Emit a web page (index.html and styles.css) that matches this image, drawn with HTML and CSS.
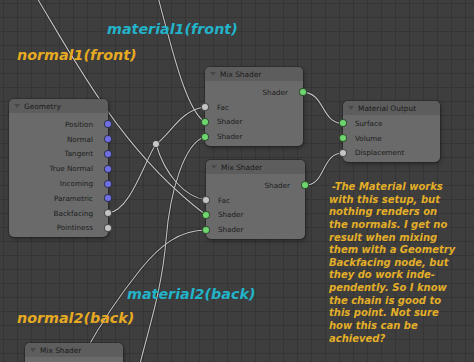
FILE: index.html
```
<!DOCTYPE html>
<html>
<head>
<meta charset="utf-8">
<link rel="stylesheet" href="styles.css">
</head>
<body>
<div class="editor">
  <svg class="wires" width="474" height="362" viewBox="0 0 474 362">
    <defs>
      <path id="w1" d="M31,-12 C75,60 120,150 206,215"/>
      <path id="w2" d="M156,-10 C170,40 185,110 205,122"/>
      <path id="w3" d="M205,137 C185,142 170,190 166,240 S148,330 138,372"/>
      <path id="w4" d="M206,230 C180,230 160,245 140,270 C120,295 100,325 85,352"/>
      <path id="w5" d="M108,213 C130,212 145,160 156,144"/>
      <path id="w6" d="M156,144 C170,135 180,110 205,107"/>
      <path id="w7" d="M156,144 C165,175 185,197 206,200"/>
      <path id="w8" d="M303,92.4 C325,92.4 321,123.4 343,123.4"/>
      <path id="w9" d="M305,185.4 C326,185.4 321,153 343,153"/>
    </defs>
    <g class="wire-bg">
      <use href="#w1"/><use href="#w2"/><use href="#w3"/><use href="#w4"/><use href="#w5"/><use href="#w6"/><use href="#w7"/><use href="#w8"/><use href="#w9"/>
    </g>
    <g class="wire-fg">
      <use href="#w1"/><use href="#w2"/><use href="#w3"/><use href="#w4"/><use href="#w5"/><use href="#w6"/><use href="#w7"/><use href="#w8"/><use href="#w9"/>
    </g>
    <circle class="reroute" cx="156" cy="144" r="3.6"/>
  </svg>

  <div class="node node-geometry">
    <div class="node-head"><span class="tri"></span>Geometry</div>
    <div class="node-body">
      <div class="row out"><span>Position</span><i class="sock vec"></i></div>
      <div class="row out"><span>Normal</span><i class="sock vec"></i></div>
      <div class="row out"><span>Tangent</span><i class="sock vec"></i></div>
      <div class="row out"><span>True Normal</span><i class="sock vec"></i></div>
      <div class="row out"><span>Incoming</span><i class="sock vec"></i></div>
      <div class="row out"><span>Parametric</span><i class="sock vec"></i></div>
      <div class="row out"><span>Backfacing</span><i class="sock val"></i></div>
      <div class="row out"><span>Pointiness</span><i class="sock val"></i></div>
    </div>
  </div>

  <div class="node node-mix1">
    <div class="node-head"><span class="tri"></span>Mix Shader</div>
    <div class="node-body">
      <div class="row out"><span>Shader</span><i class="sock sh"></i></div>
      <div class="row in"><i class="sock val"></i><span>Fac</span></div>
      <div class="row in"><i class="sock sh"></i><span>Shader</span></div>
      <div class="row in"><i class="sock sh"></i><span>Shader</span></div>
    </div>
  </div>

  <div class="node node-mix2">
    <div class="node-head"><span class="tri"></span>Mix Shader</div>
    <div class="node-body">
      <div class="row out"><span>Shader</span><i class="sock sh"></i></div>
      <div class="row in"><i class="sock val"></i><span>Fac</span></div>
      <div class="row in"><i class="sock sh"></i><span>Shader</span></div>
      <div class="row in"><i class="sock sh"></i><span>Shader</span></div>
    </div>
  </div>

  <div class="node node-output">
    <div class="node-head"><span class="tri"></span>Material Output</div>
    <div class="node-body">
      <div class="row in"><i class="sock sh"></i><span>Surface</span></div>
      <div class="row in"><i class="sock sh"></i><span>Volume</span></div>
      <div class="row in"><i class="sock val"></i><span>Displacement</span></div>
    </div>
  </div>

  <div class="node node-mix3">
    <div class="node-head"><span class="tri"></span>Mix Shader</div>
    <div class="node-body"></div>
  </div>

  <div class="note cyan note-m1">material1(front)</div>
  <div class="note orange note-n1">normal1(front)</div>
  <div class="note cyan note-m2">material2(back)</div>
  <div class="note orange note-n2">normal2(back)</div>

  <div class="para">
    <div class="first">-The Material works</div>
    <div>with this setup, but</div>
    <div>nothing renders on</div>
    <div>the normals. I get no</div>
    <div>result when mixing</div>
    <div>them with a Geometry</div>
    <div>Backfacing node, but</div>
    <div>they do work inde-</div>
    <div>pendently. So I know</div>
    <div>the chain is good to</div>
    <div>this point. Not sure</div>
    <div>how this can be</div>
    <div>achieved?</div>
  </div>
</div>
</body>
</html>
```

FILE: styles.css
```
html, body {
  margin: 0;
  padding: 0;
  background: #3d3d3d;
}

.editor {
  position: relative;
  width: 474px;
  height: 362px;
  overflow: hidden;
  background-color: #3e3e3e;
  background-image:
    linear-gradient(to right, #353535 1px, transparent 1px),
    linear-gradient(to bottom, #353535 1px, transparent 1px);
  background-size: 14px 14px;
  background-position: 3px 3px;
  font-family: "DejaVu Sans", sans-serif;
}

.wires {
  position: absolute;
  left: 0;
  top: 0;
}

.wire-bg {
  fill: none;
  stroke: rgba(25, 25, 25, 0.55);
  stroke-width: 2.6;
}

.wire-fg {
  fill: none;
  stroke: #c2c2c2;
  stroke-width: 1.1;
}

.reroute {
  fill: #c9c9c9;
  stroke: #2a2a2a;
  stroke-width: 0.8;
}

/* nodes */
.node {
  position: absolute;
  background: #6a6a6a;
  border-radius: 5px;
  box-shadow: 0 0 0 1px rgba(30, 30, 30, 0.45), 1px 2px 4px rgba(0, 0, 0, 0.35);
  color: #1c1c1c;
}

.node-head {
  height: 14px;
  display: flex;
  align-items: center;
  padding-left: 5px;
  background: #5d5d5d;
  border-radius: 5px 5px 0 0;
  font-size: 7.4px;
  color: #1a1a1a;
}

.tri {
  width: 0;
  height: 0;
  border-left: 3px solid transparent;
  border-right: 3px solid transparent;
  border-top: 4px solid #484848;
  margin-right: 4px;
}

.node-body {
  padding: 4px 0 2px;
  font-size: 7.2px;
}

.row {
  height: 14.8px;
  display: flex;
  align-items: center;
}

.row.out {
  justify-content: flex-end;
}

.row.out .sock {
  margin-left: 11px;
  margin-right: -4px;
}

.row.in .sock {
  margin-left: -4px;
  margin-right: 8px;
}

.sock {
  display: block;
  width: 8px;
  height: 8px;
  box-sizing: border-box;
  border-radius: 50%;
  border: 1px solid rgba(25, 25, 25, 0.7);
  flex: none;
}

.sock.vec { background: #7070e2; }
.sock.val { background: #c4c4c4; }
.sock.sh  { background: #6fd66f; }

.node-geometry { left: 9px;   top: 99px;  width: 99px; }
.node-mix1     { left: 205px; top: 67px;  width: 98px; }
.node-mix2     { left: 206px; top: 160px; width: 99px; }
.node-output   { left: 343px; top: 101px; width: 97px; }
.node-output .node-body { padding-top: 1px; }
.node-mix3     { left: 25px;  top: 343px; width: 98px; height: 40px; }

/* annotations */
.note {
  position: absolute;
  font-size: 14.3px;
  font-weight: bold;
  font-style: italic;
  line-height: 1;
  white-space: nowrap;
}

.cyan   { color: #22b3c9; }
.orange { color: #e6aa22; }

.note-m1 { left: 107px; top: 22px; }
.note-n1 { left: 17px;  top: 48px; }
.note-m2 { left: 127px; top: 287px; }
.note-n2 { left: 17px;  top: 311px; }

.para {
  position: absolute;
  left: 329px;
  top: 181px;
  font-size: 10px;
  line-height: 12.63px;
  font-weight: bold;
  font-style: italic;
  color: #e3ae28;
  white-space: nowrap;
}

.para .first {
  text-indent: 3px;
}
```
